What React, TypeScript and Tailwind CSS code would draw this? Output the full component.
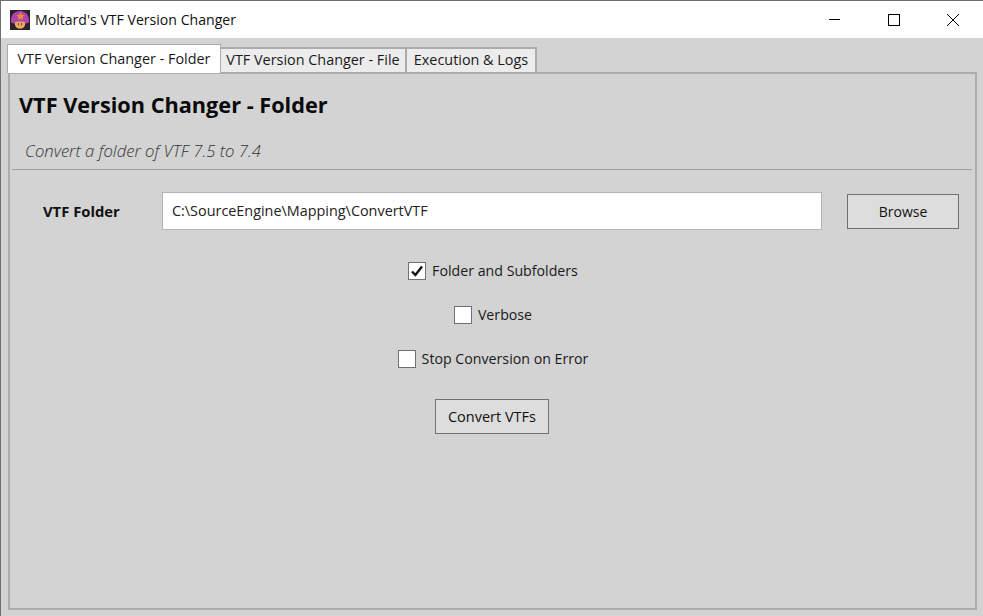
import React from 'react';

const font = { fontFamily: '"Open Sans", "Noto Sans", sans-serif' };

const MushroomIcon: React.FC = () => (
  <svg width="20" height="20" viewBox="0 0 20 20" className="shrink-0">
    <rect width="20" height="20" fill="#2a2226" />
    <path d="M1 10.5 C1 4.5 5 1 10 1 C15 1 19 4.5 19 10.5 C19 13.5 17 14 15 13.2 L5 13.2 C3 14 1 13.5 1 10.5 Z" fill="#b044ac" />
    <path d="M10.5 2 L11.7 4.8 L14.7 5.1 L12.5 7.1 L13.1 10 L10.5 8.5 L7.9 10 L8.5 7.1 L6.3 5.1 L9.3 4.8 Z" fill="#e8913a" />
    <path d="M5 12.6 C6 11.2 14 11.2 15 12.6 C15.8 16 13.4 18.8 10 18.8 C6.6 18.8 4.2 16 5 12.6 Z" fill="#eba860" />
    <rect x="8" y="13" width="1" height="2.4" fill="#7a4a2c" />
    <rect x="11" y="13" width="1" height="2.4" fill="#7a4a2c" />
  </svg>
);

const Check: React.FC<{ label: string; checked?: boolean }> = ({ label, checked }) => (
  <div className="ml-[2px] h-[18px] flex items-center gap-[6px] text-[14.2px] text-[#1a1a1a]">
    <div className="w-[18px] h-[18px] bg-white border border-[#707070] flex items-center justify-center">
      {checked && (
        <svg width="14" height="14" viewBox="0 0 14 14">
          <path d="M2 7.5 L5.4 11 L12 2.5" fill="none" stroke="#111" strokeWidth="2.4" />
        </svg>
      )}
    </div>
    <span>{label}</span>
  </div>
);

export default function App() {
  return (
    <div style={font} className="w-[983px] h-[616px] flex flex-col overflow-hidden bg-[#d3d3d3] border-t border-l border-[#707070]">
      <div className="h-[37px] bg-white flex items-center shrink-0">
        <div className="ml-[9px] mr-[5px]">
          <MushroomIcon />
        </div>
        <span className="text-[14.1px] text-[#111]">Moltard's VTF Version Changer</span>
        <div className="ml-auto mr-[1px] flex items-center">
          <div className="w-[59px] flex justify-center">
            <div className="w-[11px] h-[1px] bg-black" />
          </div>
          <div className="w-[59px] flex justify-center">
            <div className="w-[12px] h-[12px] border border-black" />
          </div>
          <div className="w-[59px] flex justify-center">
            <svg width="12" height="12" viewBox="0 0 12 12">
              <path d="M0 0 L12 12 M12 0 L0 12" stroke="#000" strokeWidth="1" />
            </svg>
          </div>
        </div>
      </div>

      <div className="flex-1 flex flex-col pl-[6px] pr-[5px] pb-[6px] pt-[5px] min-h-0">
        <div className="flex items-end h-[29px] shrink-0">
          <div className="relative z-10 h-[29px] w-[214px] -mb-[1px] pb-[1px] flex items-center justify-center bg-white border border-b-0 border-[#acacac] text-[14.4px] text-[#1a1a1a]">
            VTF Version Changer - Folder
          </div>
          <div className="h-[25px] w-[186px] pb-[2px] flex items-center justify-center bg-[#ececec] border-2 border-l-0 border-b-0 border-[#acacac] text-[14.4px] text-[#1a1a1a]">
            VTF Version Changer - File
          </div>
          <div className="h-[25px] w-[130px] pb-[2px] flex items-center justify-center bg-[#ececec] border-2 border-l-0 border-b-0 border-[#acacac] text-[14.4px] text-[#1a1a1a]">
            Execution & Logs
          </div>
        </div>
        <div className="flex-1 mx-[1px] border-2 border-[#acacac] bg-[#d3d3d3] pl-[2px] pr-[3px] flex flex-col">
          <h1 className="mt-[16px] ml-[7px] h-[30px] leading-[30px] text-[21.7px] font-bold text-[#0a0a0a]">VTF Version Changer - Folder</h1>
          <p className="mt-[19px] ml-[13px] h-[24px] leading-[24px] text-[16.7px] font-light italic text-[#333]">Convert a folder of VTF 7.5 to 7.4</p>
          <div className="mt-[6px] h-[1px] bg-[#a0a0a0]" />

          <div className="mt-[22px] flex items-center">
            <label className="ml-[31px] w-[119px] text-[14.8px] font-bold text-[#111]">VTF Folder</label>
            <div className="w-[660px] h-[38px] bg-white border border-[#b4b4b4] flex items-center pl-[9px] text-[14.4px] text-[#222]">
              C:\SourceEngine\Mapping\ConvertVTF
            </div>
            <button className="ml-[25px] w-[112px] h-[35px] bg-[#dddddd] border border-[#707070] text-[14px] text-[#111]">Browse</button>
          </div>

          <div className="mt-[32px] flex flex-col items-center gap-[26px]">
            <Check label="Folder and Subfolders" checked />
            <Check label="Verbose" />
            <Check label="Stop Conversion on Error" />
            <button className="mt-[5px] w-[114px] h-[35px] bg-[#dddddd] border border-[#707070] text-[14.5px] text-[#111]">Convert VTFs</button>
          </div>
        </div>
      </div>
    </div>
  );
}
